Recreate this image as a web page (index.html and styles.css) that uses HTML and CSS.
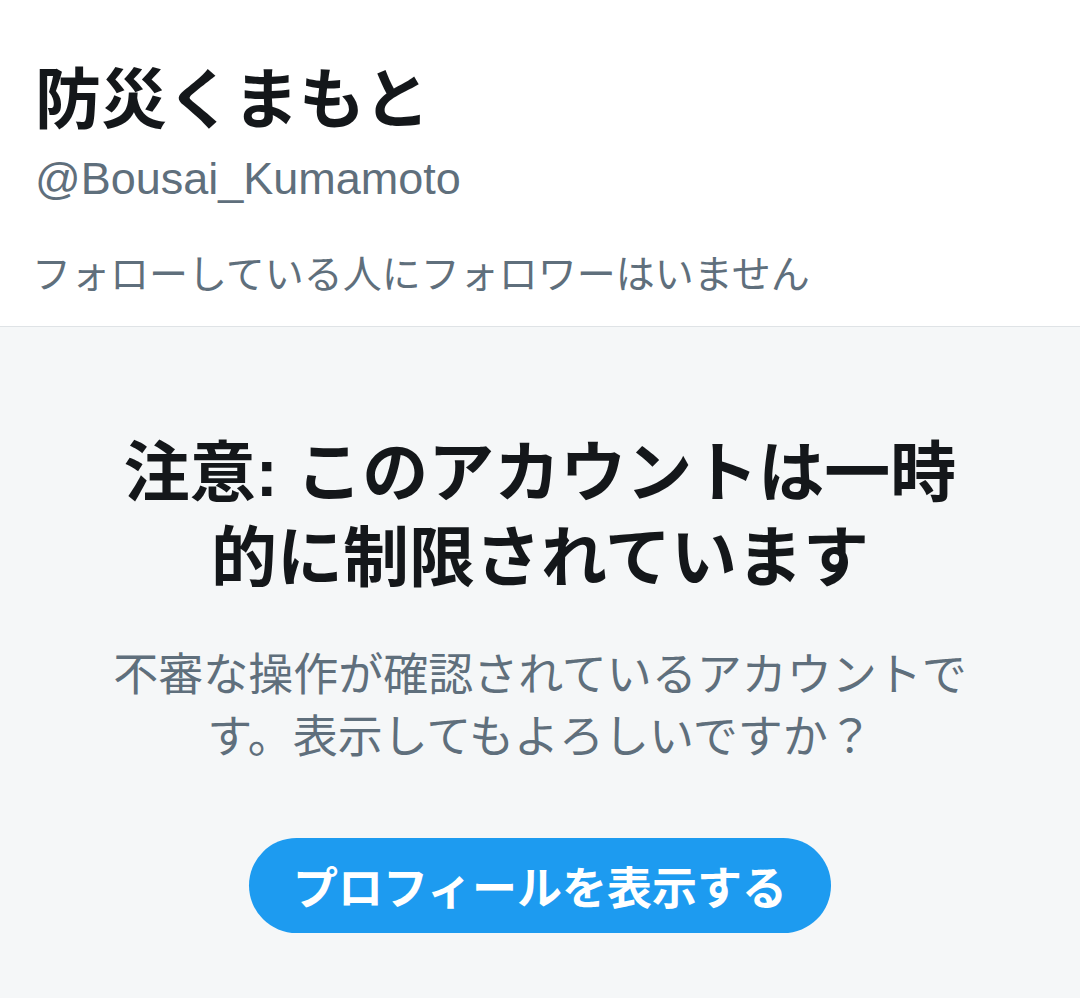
FILE: index.html
```html
<!DOCTYPE html>
<html lang="ja">
<head>
    <meta charset="UTF-8">
    <meta name="viewport" content="width=device-width, initial-scale=1.0">
    <title>防災くまもと (@Bousai_Kumamoto)</title>
    <link rel="stylesheet" href="styles.css">
</head>
<body>

    <div class="profile-header">
        <h1 class="profile-name">防災くまもと</h1>
        <div class="profile-handle">@Bousai_Kumamoto</div>
        <p class="followers-note">フォローしている人にフォロワーはいません</p>
    </div>

    <div class="warning-view">
        <div class="warning-box">
            <h2 class="warning-title">注意: このアカウントは一時的に制限されています</h2>
            <p class="warning-text">不審な操作が確認されているアカウントです。表示してもよろしいですか？</p>
            <button class="show-profile-button">プロフィールを表示する</button>
        </div>
    </div>

</body>
</html>
```

FILE: styles.css
```css
/* styles for the restricted profile page */

:root {
    --background-color: #f5f7f8;
    --surface-color: #ffffff;
    --text-color: #14171a;
    --muted-color: #5f6f7c;
    --border-color: #dfe3e6;
    --primary-color: #1d9bf0;
}

body {
    margin: 0;
    font-family: 'Liberation Sans', 'Noto Sans CJK JP', sans-serif;
    background-color: var(--background-color);
    color: var(--text-color);
    min-height: 100vh;
}

/* --- Header (name, handle, followers note) --- */
.profile-header {
    background-color: var(--surface-color);
    border-bottom: 1px solid var(--border-color);
    padding: 61px 35px 24px;
}

.profile-name {
    margin: 0;
    font-size: 66px;
    line-height: 78px;
    font-weight: bold;
}

.profile-handle {
    margin-top: 14px;
    font-size: 45px;
    line-height: 52px;
    color: var(--muted-color);
}

.followers-note {
    margin: 42px 0 0 -3px;
    font-size: 39px;
    line-height: 55px;
    color: var(--muted-color);
}

/* --- Warning block --- */
.warning-view {
    display: flex;
    justify-content: center;
    padding-top: 104px;
}

.warning-box {
    width: 880px;
    display: flex;
    flex-direction: column;
    align-items: center;
    text-align: center;
}

.warning-title {
    margin: 0;
    font-size: 66px;
    line-height: 85px;
    font-weight: bold;
}

.warning-text {
    margin: 44px 0 0;
    font-size: 45px;
    line-height: 62px;
    color: var(--muted-color);
}

.show-profile-button {
    margin-top: 69px;
    height: 95px;
    padding: 0 44px;
    border: none;
    border-radius: 48px;
    background-color: var(--primary-color);
    color: #ffffff;
    font-family: inherit;
    font-size: 45px;
    font-weight: bold;
    cursor: pointer;
}
```
